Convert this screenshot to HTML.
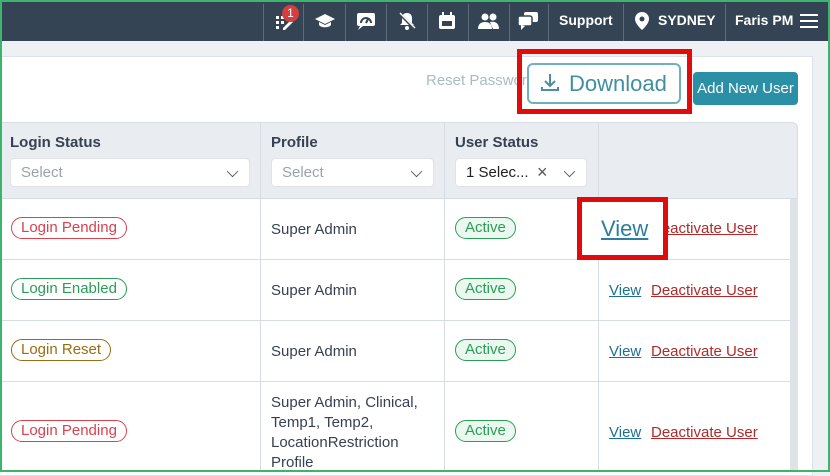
<!DOCTYPE html>
<html><head><meta charset="utf-8"><style>
*{box-sizing:border-box;margin:0;padding:0}
body{width:830px;height:472px;overflow:hidden;font-family:"Liberation Sans",sans-serif;background:#eef1f4;position:relative}
.frame{position:absolute;left:0;top:0;width:830px;height:472px;border:2px solid #3db46d;z-index:50;pointer-events:none}
.top{position:absolute;left:0;top:0;width:830px;height:41px;background:#344455;color:#fff}
.sep{position:absolute;top:4px;width:1px;height:37px;background:#5d6c7b}
.ic{position:absolute;top:12px}
.t{position:absolute;top:12px;font-size:14px;font-weight:bold;color:#fff}
.card{position:absolute;left:0;top:56px;width:813px;height:420px;background:#fff;border:1px solid #dde2e8;border-left:none}
.abs{position:absolute}
.hdr{position:absolute;left:2px;top:122px;width:796px;height:77px;background:#e9edf1;border-top:1px solid #d6dce4;border-bottom:1px solid #d6dce4;border-right:1px solid #d6dce4;border-radius:0 6px 0 0}
.vl{position:absolute;width:1px;background:#d6dce4}
.hl{position:absolute;left:2px;width:788px;height:1px;background:#d6dce4}
.ht{position:absolute;top:134px;font-size:15px;font-weight:bold;color:#374151}
.sel{position:absolute;top:158px;height:29px;background:#fff;border:1px solid #dfe3e8;border-radius:4px;font-size:15px;color:#9aa3ad;padding:5px 10px}
.chev{position:absolute;right:12px;top:8px;width:9px;height:9px;border-right:1.5px solid #555;border-bottom:1.5px solid #555;transform:rotate(45deg) scale(.9)}
.pill{position:absolute;height:22px;border:1px solid;border-radius:11px;font-size:15px;padding:1px 9px;line-height:18px;white-space:nowrap}
.red{color:#d9414f;border-color:#d9414f}
.grn{color:#2a9d57;border-color:#2a9d57}
.ora{color:#9a6d12;border-color:#9a6d12}
.act{color:#2a9d57;border-color:#2a9d57;background:#ebf8ef;left:455px}
.txt{position:absolute;left:271px;font-size:15px;color:#374151;line-height:20px}
.v{position:absolute;left:609px;font-size:15px;color:#1d6f8f;text-decoration:underline}
.d{position:absolute;left:651px;font-size:15px;color:#b02a2a;text-decoration:underline}
.box{position:absolute;border:5px solid #e20b0b}
</style></head><body>
<div class="top">
<div class="sep" style="left:263px"></div><div class="sep" style="left:303px"></div><div class="sep" style="left:345px"></div><div class="sep" style="left:386px"></div><div class="sep" style="left:427px"></div><div class="sep" style="left:468px"></div><div class="sep" style="left:509px"></div><div class="sep" style="left:548px"></div><div class="sep" style="left:623px"></div><div class="sep" style="left:725px"></div>
<svg class="ic" style="left:275px" width="20" height="18" viewBox="0 0 20 18" fill="#fff"><rect x="1" y="4" width="3" height="3"/><rect x="6" y="4" width="3" height="3"/><rect x="1" y="9" width="3" height="3"/><rect x="6" y="9" width="3" height="3"/><rect x="1" y="14" width="3" height="3"/><path d="M8 16l8-8 2 2-8 8h-2z"/></svg>
<div class="abs" style="left:282px;top:5px;width:17px;height:17px;border-radius:50%;background:#d23f3f;color:#fff;font-size:12px;text-align:center;line-height:17px">1</div>
<svg class="ic" style="left:315px;top:13px" width="20" height="16" viewBox="0 0 20 16" fill="#fff"><path d="M10 1L0 6l10 5 10-5z"/><path d="M4 9v3c2 3 10 3 12 0V9l-6 3z"/></svg>
<svg class="ic" style="left:356px" width="20" height="18" viewBox="0 0 20 18"><rect x="1" y="1" width="18" height="13" rx="2" fill="#fff"/><path d="M4 14l-2 4 5-4z" fill="#fff"/><path d="M5 11a5 5 0 0110 0" stroke="#344455" stroke-width="2" fill="none"/><path d="M10 11l2-4" stroke="#344455" stroke-width="2"/></svg>
<svg class="ic" style="left:397px" width="20" height="18" viewBox="0 0 20 18" fill="#fff"><path d="M10 1c-3 0-5 2-5 5v5l-2 2h14l-2-2V6c0-3-2-5-5-5z"/><circle cx="10" cy="16" r="2"/><path d="M2 1l16 16" stroke="#344455" stroke-width="3"/><path d="M3 1l15 15" stroke="#fff" stroke-width="1.5"/></svg>
<svg class="ic" style="left:438px" width="18" height="18" viewBox="0 0 18 18"><rect x="1" y="3" width="16" height="14" rx="2" fill="#fff"/><rect x="4" y="0" width="2" height="4" fill="#fff"/><rect x="12" y="0" width="2" height="4" fill="#fff"/><rect x="4" y="9" width="10" height="5" fill="#344455"/></svg>
<svg class="ic" style="left:478px;top:13px" width="22" height="16" viewBox="0 0 22 16" fill="#fff"><circle cx="7" cy="4" r="3.5"/><circle cx="15" cy="4" r="3.5"/><path d="M0 16c0-5 3-7 7-7s7 2 7 7z"/><path d="M12 9c5-1 9 1 9 7h-6z"/></svg>
<svg class="ic" style="left:518px" width="20" height="18" viewBox="0 0 20 18" fill="#fff"><rect x="6" y="0" width="14" height="10" rx="2"/><rect x="0" y="4" width="14" height="10" rx="2" stroke="#344455" stroke-width="1.5"/><path d="M3 13v5l4-4z"/></svg>
<div class="t" style="left:559px">Support</div>
<svg class="ic" style="left:635px" width="14" height="18" viewBox="0 0 14 18"><path d="M7 0a7 7 0 00-7 7c0 5 7 11 7 11s7-6 7-11a7 7 0 00-7-7z" fill="#fff"/><circle cx="7" cy="7" r="2.5" fill="#344455"/></svg>
<div class="t" style="left:658px">SYDNEY</div>
<div class="t" style="left:735px">Faris PM</div>
<svg class="ic" style="left:800px;top:14px" width="18" height="14" viewBox="0 0 18 14" fill="#fff"><rect y="0" width="18" height="2"/><rect y="6" width="18" height="2"/><rect y="12" width="18" height="2"/></svg>
</div>
<div class="card"></div>
<div class="abs" style="left:426px;top:72px;font-size:15px;color:#a9bcc4">Reset Password</div>
<div class="abs" style="left:527px;top:63px;width:154px;height:41px;background:#fff;border:2px solid #6fb0bd;border-radius:6px;font-size:22px;color:#3f8fa1;padding:5px 0 0 40px;line-height:28px">Download</div>
<svg class="abs" style="left:540px;top:72px" width="20" height="20" viewBox="0 0 20 20" stroke="#4a8ea0" stroke-width="2" fill="none"><path d="M10 2v12M5 9l5 5 5-5M2 15v3h16v-3"/></svg>
<div class="abs" style="left:693px;top:72px;width:105px;height:33px;background:#2b8fa5;border-radius:4px;color:#fff;font-size:15px;text-align:center;line-height:17px;padding-top:8px">Add New User</div>
<div class="box" style="left:517px;top:49px;width:175px;height:65px"></div>
<div class="hdr"></div>
<div class="ht" style="left:10px">Login Status</div>
<div class="ht" style="left:271px">Profile</div>
<div class="ht" style="left:455px">User Status</div>
<div class="sel" style="left:10px;width:240px">Select<div class="chev"></div></div>
<div class="sel" style="left:271px;width:163px">Select<div class="chev"></div></div>
<div class="sel" style="left:455px;width:132px;color:#222">1 Selec...<span style="position:absolute;left:81px;top:3px;color:#555;font-size:18px">×</span><div class="chev"></div></div>
<div class="vl" style="left:260px;top:122px;height:350px"></div>
<div class="vl" style="left:444px;top:122px;height:350px"></div>
<div class="vl" style="left:598px;top:122px;height:350px"></div>
<div class="abs" style="left:790px;top:199px;width:8px;height:273px;background:#dfe3e8"></div>
<div class="hl" style="top:259px"></div><div class="hl" style="top:320px"></div><div class="hl" style="top:381px"></div>
<div class="pill red" style="left:11px;top:217px">Login Pending</div>
<div class="pill grn" style="left:11px;top:278px">Login Enabled</div>
<div class="pill ora" style="left:11px;top:339px">Login Reset</div>
<div class="pill red" style="left:11px;top:420px">Login Pending</div>
<div class="txt" style="top:220px">Super Admin</div>
<div class="txt" style="top:281px">Super Admin</div>
<div class="txt" style="top:342px">Super Admin</div>
<div class="txt" style="top:393px">Super Admin, Clinical,<br>Temp1, Temp2,<br>LocationRestriction<br>Profile</div>
<div class="pill act" style="top:217px">Active</div>
<div class="pill act" style="top:278px">Active</div>
<div class="pill act" style="top:339px">Active</div>
<div class="pill act" style="top:420px">Active</div>
<div class="d" style="top:220px">Deactivate User</div>
<div class="box" style="left:577px;top:197px;width:91px;height:63px;background:#fff"></div>
<div class="abs" style="left:601px;top:216px;font-size:22px;color:#2b7ea0;text-decoration:underline">View</div>
<div class="v" style="top:282px">View</div><div class="d" style="top:282px">Deactivate User</div>
<div class="v" style="top:343px">View</div><div class="d" style="top:343px">Deactivate User</div>
<div class="v" style="top:424px">View</div><div class="d" style="top:424px">Deactivate User</div>
<div class="frame"></div>
</body></html>
